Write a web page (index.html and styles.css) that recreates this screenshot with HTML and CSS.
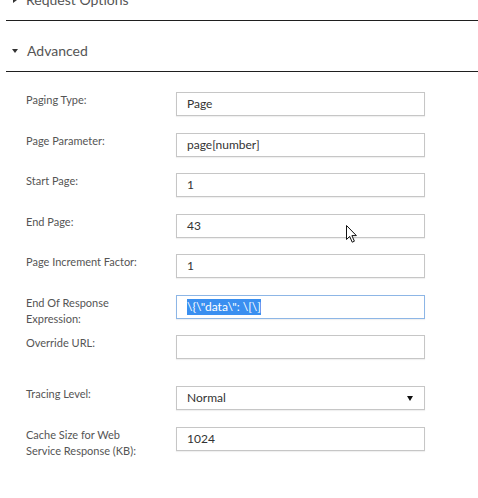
FILE: index.html
```html
<!DOCTYPE html>
<html lang="en">
<head>
    <meta charset="UTF-8">
    <meta name="viewport" content="width=device-width, initial-scale=1.0">
    <title>Advanced Options</title>
    <link rel="stylesheet" href="styles.css">
</head>
<body>
    <div class="panel">
        <div class="section-head">
            <span class="caret caret-right"></span>
            <span class="section-title">Request Options</span>
        </div>
        <div class="section-head">
            <span class="caret caret-down"></span>
            <span class="section-title">Advanced</span>
        </div>

        <div class="form">
            <div class="row">
                <div class="label">Paging Type:</div>
                <div class="field">Page</div>
            </div>
            <div class="row">
                <div class="label">Page Parameter:</div>
                <div class="field">page[number]</div>
            </div>
            <div class="row">
                <div class="label">Start Page:</div>
                <div class="field">1</div>
            </div>
            <div class="row">
                <div class="label">End Page:</div>
                <div class="field">43</div>
            </div>
            <div class="row">
                <div class="label">Page Increment Factor:</div>
                <div class="field">1</div>
            </div>
            <div class="row">
                <div class="label">End Of Response<br>Expression:</div>
                <div class="field focused"><span class="selected">\{\"data\": \[\]</span></div>
            </div>
            <div class="row">
                <div class="label">Override URL:</div>
                <div class="field"></div>
            </div>
            <div class="row group-gap">
                <div class="label">Tracing Level:</div>
                <div class="field select">
                    <span>Normal</span>
                    <span class="select-arrow"></span>
                </div>
            </div>
            <div class="row">
                <div class="label">Cache Size for Web<br>Service Response (KB):</div>
                <div class="field">1024</div>
            </div>
        </div>
    </div>

    <!-- mouse pointer -->
    <svg class="pointer" width="14" height="20" viewBox="0 0 14 20">
        <path d="M1.5 1.5 L1.5 15.5 L4.7 12.4 L7.2 18.2 L9.4 17.2 L6.9 11.6 L11.4 11.6 Z" fill="#fff" stroke="#111" stroke-width="1" stroke-linejoin="miter"/>
    </svg>
</body>
</html>
```

FILE: styles.css
```css
body { margin: 0; background: #fff; font-family: Lato, "Open Sans", sans-serif; color: #4d4d4d; }
.panel { margin-top: -30px; }

.section-head { margin-left: 6px; padding: 20px 0 10px 6px; line-height: 20px; border-bottom: 1px solid #1f1f1f; display: flex; align-items: center; }
.section-title { font-size: 14px; color: #555; margin-left: 9px; }
.caret { width: 0; height: 0; display: inline-block; }
.caret-right { border-top: 3px solid transparent; border-bottom: 3px solid transparent; border-left: 4px solid #333; margin-left: 1px; }
.caret-down { border-left: 3.5px solid transparent; border-right: 3.5px solid transparent; border-top: 4px solid #333; }

.form { padding: 20px 0 0 26px; }
.row { display: flex; height: 24px; margin-bottom: 16.5px; }
.row.group-gap { margin-top: 27px; }
.label { width: 150px; flex: none; font-size: 11px; line-height: 16px; color: #555; }
.field { width: 249px; height: 24px; box-sizing: border-box; border: 1px solid #c6c6c6; box-shadow: 0 1px 1px rgba(0,0,0,0.06); padding: 0 10px; font-size: 12px; line-height: 22px; color: #333; display: flex; align-items: center; }
.field.focused { border-color: #8db6e6; }
.selected { background: #3a8ff0; color: #fff; line-height: 16px; white-space: pre; }
.field.select { justify-content: space-between; }
.select-arrow { width: 0; height: 0; border-left: 3.5px solid transparent; border-right: 3.5px solid transparent; border-top: 5px solid #111; margin-right: 1px; }

.pointer { position: absolute; left: 345px; top: 224px; }
```
